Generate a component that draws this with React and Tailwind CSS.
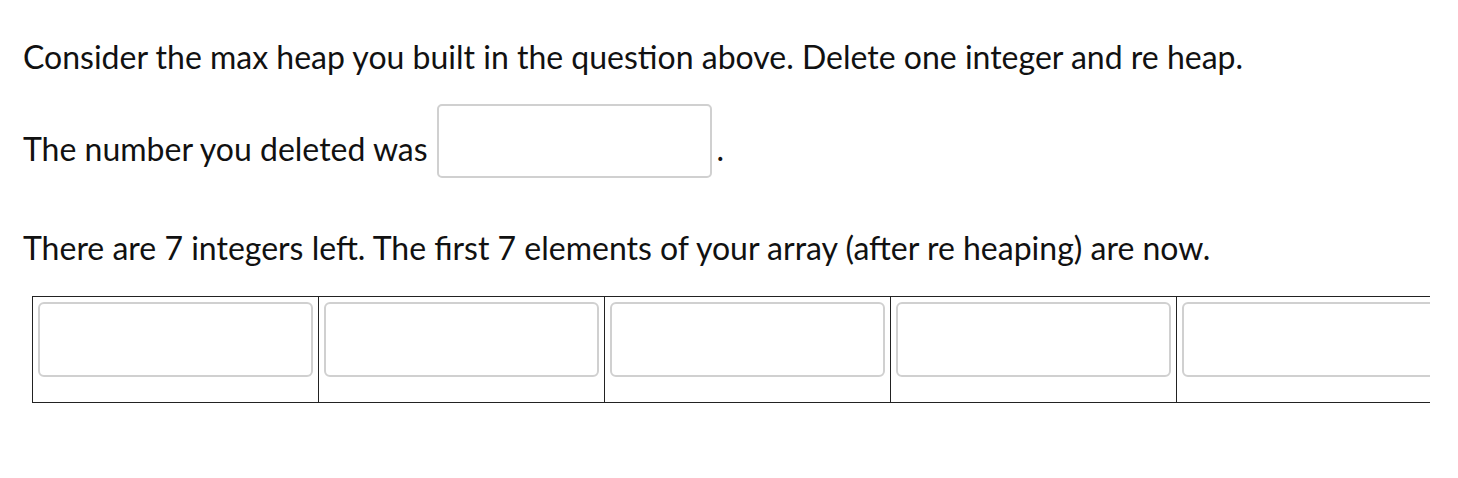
export default function App() {
  const cells = [0, 1, 2, 3, 4, 5, 6];
  return (
    <div className="min-h-screen bg-white text-[#111] text-[32px]" style={{ fontFamily: 'Lato, "Liberation Sans", sans-serif' }}>
      <div className="pl-[23px] pt-[39px]">
        <p className="leading-[36px]">Consider the max heap you built in the question above. Delete one integer and re heap.</p>

        <div className="mt-[29px] flex items-end h-[74px]">
          <span className="leading-[36px] pb-[11px]">The number you deleted was</span>
          <input type="text" className="ml-[9px] w-[275px] h-[74px] border-2 border-[#d0d0d0] rounded-[5px] bg-white" />
          <span className="leading-[36px] pb-[11px] ml-[5px]">.</span>
        </div>

        <p className="mt-[52px] leading-[36px]">There are 7 integers left. The first 7 elements of your array (after re heaping) are now.</p>
      </div>

      <div className="ml-[32px] mt-[30px] w-[1398px] overflow-hidden">
        <table className="border-collapse border border-[#222]">
          <tbody>
            <tr>
              {cells.map((c) => (
                <td key={c} className="border border-[#222] w-[286px] min-w-[286px] p-0 align-top">
                  <div className="px-[5px] pt-[5px] pb-[25px]">
                    <input type="text" className="block w-[275px] h-[75px] border-2 border-[#d0d0d0] rounded-[6px] bg-white" />
                  </div>
                </td>
              ))}
            </tr>
          </tbody>
        </table>
      </div>
    </div>
  );
}
